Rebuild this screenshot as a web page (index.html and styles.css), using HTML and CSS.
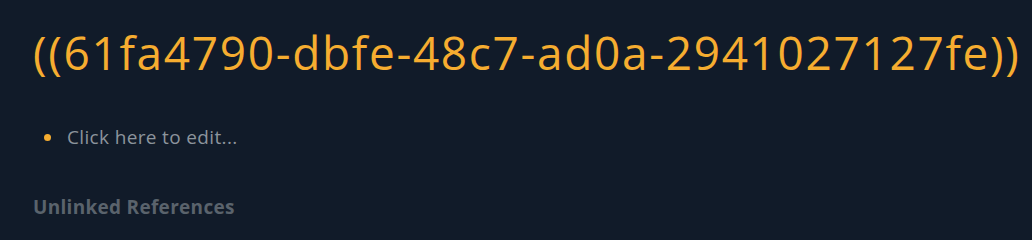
FILE: index.html
```html
<!DOCTYPE html>
<html>
<head>
<meta charset="utf-8">
<link rel="stylesheet" href="styles.css">
</head>
<body>
<div class="page">
  <h1 class="title">((61fa4790-dbfe-48c7-ad0a-2941027127fe))</h1>
  <ul class="blocks">
    <li class="block"><span class="bullet"></span><span class="block-text">Click here to edit...</span></li>
  </ul>
  <div class="refs">Unlinked References</div>
</div>
</body>
</html>
```
FILE: styles.css
```css
html, body {
  margin: 0;
  padding: 0;
  background: #111b29;
}
body {
  font-family: "Open Sans", "Noto Sans", sans-serif;
  width: 1032px;
  height: 239px;
  overflow: hidden;
}
.page {
  padding: 22px 0 0 33px;
}
.title {
  margin: 0;
  font-size: 46px;
  font-weight: 400;
  letter-spacing: 1.67px;
  color: #f6ad30;
  line-height: 60px;
  white-space: nowrap;
}
.blocks {
  list-style: none;
  margin: 42px 0 0 0;
  padding: 0;
}
.block {
  display: flex;
  align-items: center;
  height: 26px;
}
.bullet {
  width: 7px;
  height: 7px;
  border-radius: 50%;
  background: #f6ad30;
  margin-left: 11px;
  margin-right: 16px;
}
.block-text {
  font-size: 19px;
  letter-spacing: 0.35px;
  color: #8c949c;
}
.refs {
  margin-top: 44px;
  font-size: 19px;
  letter-spacing: 0.3px;
  font-weight: 700;
  color: #5a636c;
}
```
